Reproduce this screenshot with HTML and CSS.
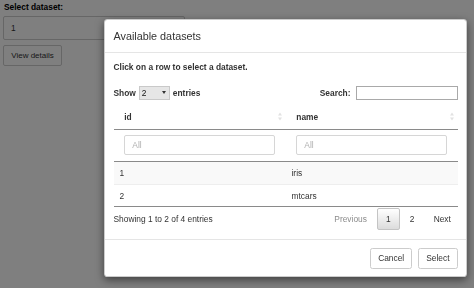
FILE: index.html
```html
<!DOCTYPE html>
<html>
<head>
<meta charset="utf-8">
<link rel="stylesheet" href="styles.css">
</head>
<body>
<div class="page">
  <label class="lbl">Select dataset:</label>
  <div class="sel-input">1</div>
  <button class="btn-bg">View details</button>
</div>
<div class="backdrop"></div>
<div class="modal">
  <div class="modal-header"><h4 class="modal-title">Available datasets</h4></div>
  <div class="modal-body">
    <p class="hint">Click on a row to select a dataset.</p>
    <div class="dt-top">
      <div class="dt-length">Show <span class="dt-select"><span>2</span><svg class="caret" width="4" height="3" viewBox="0 0 4 3"><path d="M0 0H4L2 3Z" fill="#333"/></svg></span> entries</div>
      <div class="dt-filter">Search: <input class="dt-search" type="text"></div>
    </div>
    <table class="dt">
      <thead>
        <tr class="head-row">
          <th><div class="th-in"><span>id</span><svg class="sort" width="4" height="9" viewBox="0 0 4 9"><path d="M0 3.5H4L2 0.5Z M0 5.5H4L2 8.5Z" fill="#e2e2e2"/></svg></div></th>
          <th><div class="th-in"><span>name</span><svg class="sort" width="4" height="9" viewBox="0 0 4 9"><path d="M0 3.5H4L2 0.5Z M0 5.5H4L2 8.5Z" fill="#e2e2e2"/></svg></div></th>
        </tr>
        <tr class="filter-row">
          <th><input class="flt" type="text" placeholder="All"></th>
          <th><input class="flt" type="text" placeholder="All"></th>
        </tr>
      </thead>
      <tbody>
        <tr class="odd"><td>1</td><td>iris</td></tr>
        <tr class="even"><td>2</td><td>mtcars</td></tr>
      </tbody>
    </table>
    <div class="dt-bottom">
      <div class="dt-info">Showing 1 to 2 of 4 entries</div>
      <div class="dt-paginate">
        <span class="pg disabled">Previous</span>
        <span class="pg current">1</span>
        <span class="pg">2</span>
        <span class="pg">Next</span>
      </div>
    </div>
  </div>
  <div class="modal-footer">
    <button class="btn">Cancel</button>
    <button class="btn">Select</button>
  </div>
</div>
</body>
</html>
```

FILE: styles.css
```css
* { box-sizing: border-box; }
html, body {
  margin: 0;
  padding: 0;
  background: #fff;
  font-family: "Liberation Sans", Arial, sans-serif;
  font-size: 8.4px;
  line-height: 12px;
  color: #333;
}
.page {
  padding: 1px 3px 0 3px;
  display: flex;
  flex-direction: column;
  align-items: flex-start;
}
.lbl {
  font-weight: bold;
  color: #000;
  padding-left: 1px;
  margin-bottom: 3px;
}
.sel-input {
  width: 182px;
  height: 24px;
  border: 1px solid #ccc;
  border-radius: 2px;
  padding: 5px 7px;
  color: #333;
}
.btn-bg {
  margin-top: 5px;
  height: 21px;
  width: 59px;
  padding: 0;
  font-family: inherit;
  font-size: 8px;
  color: #333;
  background: #fff;
  border: 1px solid #ccc;
  border-radius: 2px;
}
.backdrop {
  position: fixed;
  inset: 0;
  background: rgba(0, 0, 0, 0.5);
}
.modal {
  position: absolute;
  left: 104px;
  top: 19px;
  width: 363px;
  background: #fff;
  border: 1px solid rgba(0, 0, 0, 0.2);
  border-radius: 3.6px;
  box-shadow: 0 3px 9px rgba(0, 0, 0, 0.5);
  display: flex;
  flex-direction: column;
}
.modal-header {
  padding: 8.5px 8.5px 8px;
  border-bottom: 1px solid #e5e5e5;
}
.modal-title {
  margin: 0;
  font-size: 10.8px;
  line-height: 15.4px;
  font-weight: normal;
  color: #333;
}
.modal-body {
  padding: 8.5px 8.5px 8.5px;
}
.hint {
  margin: 0 0 6px;
  font-weight: bold;
}
.dt-top {
  display: flex;
  justify-content: space-between;
  align-items: center;
  padding: 6.5px 0 3.5px;
}
.dt-length, .dt-filter {
  display: flex;
  align-items: center;
  gap: 3px;
  font-weight: bold;
}
.dt-filter { gap: 5px; }
.dt-select {
  display: inline-flex;
  align-items: center;
  justify-content: space-between;
  width: 31px;
  height: 14px;
  padding: 0 3px 0 2px;
  background: #e6e6e6;
  border: 1px solid #c9c9c9;
  font-weight: normal;
  color: #111;
}
.dt-search {
  width: 102px;
  height: 14px;
  margin: 0;
  border: 1px solid #a9a9a9;
  background: #fff;
  padding: 0 2px;
  font: inherit;
}
table.dt {
  width: 100%;
  border-collapse: collapse;
  table-layout: fixed;
}
.head-row th {
  text-align: left;
  font-weight: bold;
  padding: 7.5px 3.5px 6px 10.8px;
  line-height: 12px;
  border-bottom: 1px solid #8a8a8a;
}
.th-in {
  display: flex;
  justify-content: space-between;
  align-items: center;
}
.sort { display: block; }
.filter-row th {
  padding: 5.5px 10.8px 5.8px;
  border-bottom: 1px solid #8a8a8a;
  font-weight: normal;
}
.flt {
  display: block;
  width: 100%;
  height: 20px;
  margin: 0;
  border: 1px solid #d6d6d6;
  border-radius: 2px;
  padding: 0 7px;
  font: inherit;
  color: #333;
}
.flt::placeholder { color: #b0b0b0; }
tbody td {
  padding: 4.8px 6px;
  line-height: 12px;
  color: #333;
}
tbody tr.odd td { background: #f9f9f9; }
tbody tr.even td { border-top: 1px solid #eee; }
tbody tr:last-child td { border-bottom: 1px solid #8a8a8a; }
.dt-bottom {
  display: flex;
  justify-content: space-between;
  align-items: center;
  height: 23px;
}
.dt-paginate {
  display: flex;
  align-items: center;
  gap: 0.85px;
  margin-right: -2.5px;
}
.pg {
  display: inline-block;
  padding: 4.2px 8.15px;
  border: 1px solid transparent;
  border-radius: 2px;
  line-height: 12px;
  color: #333;
}
.pg.disabled { color: #8c8c8c; }
.pg.current {
  border-color: #c4c4c4;
  background: linear-gradient(to bottom, #ffffff 0%, #dcdcdc 100%);
}
.modal-footer {
  display: flex;
  justify-content: flex-end;
  gap: 6px;
  padding: 8px 8.5px 7.5px;
  border-top: 1px solid #e5e5e5;
}
.btn {
  height: 21px;
  padding: 0 7px;
  font-family: inherit;
  font-size: 8.4px;
  color: #333;
  background: #fff;
  border: 1px solid #ccc;
  border-radius: 2.4px;
}
```
